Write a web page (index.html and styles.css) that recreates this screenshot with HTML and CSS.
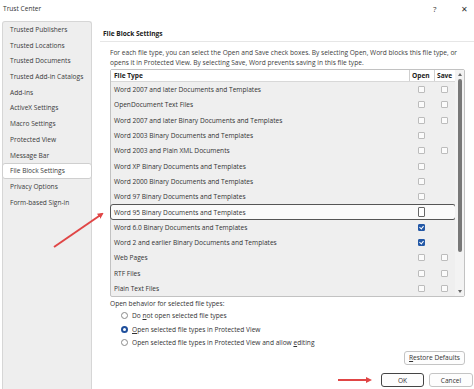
FILE: index.html
```html
<!DOCTYPE html>
<html lang="en">
<head>
  <meta charset="UTF-8" />
  <title>Trust Center</title>
  <link rel="stylesheet" href="styles.css">
</head>
<body>
  <div class="titlebar">
    <span class="title">Trust Center</span>
    <span class="help">?</span>
    <span class="close">&#x2715;</span>
  </div>

  <div class="layout">
    <div class="nav">
      <div class="nav-item">Trusted Publishers</div>
      <div class="nav-item">Trusted Locations</div>
      <div class="nav-item">Trusted Documents</div>
      <div class="nav-item">Trusted Add-in Catalogs</div>
      <div class="nav-item">Add-ins</div>
      <div class="nav-item">ActiveX Settings</div>
      <div class="nav-item">Macro Settings</div>
      <div class="nav-item">Protected View</div>
      <div class="nav-item">Message Bar</div>
      <div class="nav-item selected">File Block Settings</div>
      <div class="nav-item">Privacy Options</div>
      <div class="nav-item">Form-based Sign-in</div>
    </div>

    <div class="main">
      <div class="heading">File Block Settings</div>
      <div class="content">
        <p class="desc">For each file type, you can select the Open and Save check boxes. By selecting Open, Word blocks this file type, or opens it in Protected View. By selecting Save, Word prevents saving in this file type.</p>

        <div class="table">
          <div class="rows">
            <div class="row head">
              <span class="name">File Type</span>
              <span class="col">Open</span>
              <span class="col">Save</span>
            </div>
            <div id="fileRows"></div>
          </div>
          <div class="scrollbar">
            <span class="arrow up"></span>
            <span class="thumb"></span>
            <span class="arrow down"></span>
          </div>
        </div>

        <div class="behavior">
          <div class="label">Open behavior for selected file types:</div>
          <label class="radio"><span class="dot"></span><span>Do <u>n</u>ot open selected file types</span></label>
          <label class="radio on"><span class="dot"></span><span><u>O</u>pen selected file types in Protected View</span></label>
          <label class="radio"><span class="dot"></span><span>Open selected file types in Protected View and allow <u>e</u>diting</span></label>
        </div>

        <div class="restore-row">
          <button class="btn restore"><u>R</u>estore Defaults</button>
        </div>
      </div>

      <div class="footer">
        <button class="btn ok">OK</button>
        <button class="btn">Cancel</button>
      </div>
    </div>
  </div>

  <svg class="arrows" width="474" height="389" viewBox="0 0 474 389">
    <defs>
      <marker id="head" markerWidth="6" markerHeight="6" refX="4" refY="3" orient="auto" markerUnits="userSpaceOnUse">
        <path d="M0,0 L6,3 L0,6 Z" fill="#e04545" />
      </marker>
    </defs>
    <line x1="54" y1="247" x2="102" y2="214" stroke="#e04545" stroke-width="2" marker-end="url(#head)" />
    <line x1="338" y1="380" x2="370" y2="380" stroke="#e04545" stroke-width="2" marker-end="url(#head)" />
  </svg>

  <script>
    // name, open state, has save box
    const files = [
      ["Word 2007 and later Documents and Templates", "", true],
      ["OpenDocument Text Files", "", true],
      ["Word 2007 and later Binary Documents and Templates", "", true],
      ["Word 2003 Binary Documents and Templates", "", false],
      ["Word 2003 and Plain XML Documents", "", true],
      ["Word XP Binary Documents and Templates", "", false],
      ["Word 2000 Binary Documents and Templates", "", false],
      ["Word 97 Binary Documents and Templates", "", false],
      ["Word 95 Binary Documents and Templates", "focus", false],
      ["Word 6.0 Binary Documents and Templates", "checked", false],
      ["Word 2 and earlier Binary Documents and Templates", "checked", false],
      ["Web Pages", "", true],
      ["RTF Files", "", true],
      ["Plain Text Files", "", true]
    ];

    document.getElementById('fileRows').innerHTML = files.map(f => `
      <div class="row${f[1] === 'focus' ? ' focused' : ''}">
        <span class="name">${f[0]}</span>
        <span class="col"><span class="box ${f[1]}"></span></span>
        <span class="col">${f[2] ? '<span class="box"></span>' : ''}</span>
      </div>
    `).join('');
  </script>
</body>
</html>
```

FILE: styles.css
```css
body {
  margin: 0;
  width: 474px;
  height: 389px;
  overflow: hidden;
  background: #fff;
  font-family: "Open Sans", "Noto Sans", sans-serif;
  font-size: 6.6px;
  color: #333;
  position: relative;
}
.titlebar {
  height: 17px;
  display: flex;
  align-items: center;
  padding: 0 3px;
}
.titlebar .title {
  flex: 1;
}
.titlebar .help {
  width: 28px;
  font-size: 8px;
}
.titlebar .close {
  width: 10px;
  font-size: 8px;
}
.layout {
  display: flex;
  height: 368px;
  margin-top: 4px;
}
.nav {
  width: 88px;
  margin-left: 2px;
  background: #eeeeee;
  border: 1px solid #d6d6d6;
  border-bottom: none;
  border-radius: 3px 3px 0 0;
}
.nav-item {
  height: 15.7px;
  line-height: 15.7px;
  padding-left: 7px;
  color: #3a3a3a;
  white-space: nowrap;
}
.nav-item.selected {
  background: #fff;
  border: 1px solid #cfcfcf;
  border-radius: 3px;
  margin: 0 -1px;
  height: 13.7px;
  line-height: 13.7px;
}
.main {
  flex: 1;
  display: flex;
  flex-direction: column;
}
.heading {
  font-weight: bold;
  color: #222;
  padding: 6px 0 0 3px;
  margin-left: 8px;
  height: 14px;
  line-height: 14px;
  border-bottom: 1px solid #e6e6e6;
}
.content {
  padding-left: 18px;
  padding-right: 9px;
  flex: 1;
}
.desc {
  margin: 6px 0 1px;
  line-height: 10px;
  color: #404040;
}
.table {
  display: flex;
  height: 226px;
  border: 1px solid #c2c2c2;
  border-radius: 2px;
  background: #efefef;
}
.rows {
  flex: 1;
}
.row {
  display: flex;
  height: 15.3px;
  align-items: center;
  box-sizing: border-box;
}
.row.head {
  height: 12px;
  background: #fff;
  font-weight: bold;
  color: #222;
  border-bottom: 1px solid #d8d8d8;
}
.row .name {
  flex: 1;
  padding-left: 3px;
  white-space: nowrap;
}
.row .col {
  width: 25px;
  display: flex;
  justify-content: center;
  align-items: center;
  height: 100%;
}
.row .col:last-child {
  width: 21px;
}
.row.head .col {
  border-left: 1px solid #cfcfcf;
  justify-content: flex-start;
  padding-left: 2px;
  box-sizing: border-box;
}
.row.focused {
  background: #fafafa;
  border: 1px solid #555;
  border-radius: 3px;
  margin: 0 -1px;
}
.box {
  width: 5px;
  height: 5px;
  border: 1px solid #bcbcbc;
  border-radius: 1px;
  background: #fbfbfb;
}
.box.focus {
  height: 8px;
  border: 1px solid #666;
  background: #fff;
}
.box.checked {
  background: #2358a6;
  border-color: #2358a6;
  position: relative;
}
.box.checked::after {
  content: "";
  position: absolute;
  left: 1px;
  top: 0;
  width: 2px;
  height: 3px;
  border: solid #fff;
  border-width: 0 1px 1px 0;
  transform: rotate(40deg);
}
.scrollbar {
  width: 9px;
  display: flex;
  flex-direction: column;
  align-items: center;
  background: #f3f3f3;
}
.arrow {
  width: 0;
  height: 0;
  border-left: 2px solid transparent;
  border-right: 2px solid transparent;
  margin: 3px 0;
}
.arrow.up {
  border-bottom: 3px solid #666;
}
.arrow.down {
  border-top: 3px solid #666;
  margin-top: auto;
}
.thumb {
  width: 4px;
  height: 173px;
  background: #787878;
  border-radius: 2px;
}
.behavior {
  margin-top: 1px;
}
.label {
  height: 11px;
  line-height: 11px;
}
.radio {
  display: flex;
  align-items: center;
  height: 13.5px;
  padding-left: 11px;
}
.radio .dot {
  width: 5px;
  height: 5px;
  border: 1px solid #8a8a8a;
  border-radius: 50%;
  margin-right: 4px;
  background: #fff;
}
.radio.on .dot {
  border: 2px solid #1f4f9c;
  width: 3px;
  height: 3px;
}
.restore-row {
  display: flex;
  justify-content: flex-end;
  margin-top: 1px;
}
.btn {
  font-family: inherit;
  font-size: 6.6px;
  color: #333;
  background: #fdfdfd;
  border: 1px solid #c4c4c4;
  border-radius: 3px;
  height: 14px;
  padding: 0;
  width: 44px;
}
.btn.restore {
  width: 61px;
}
.footer {
  display: flex;
  justify-content: flex-end;
  gap: 5px;
  padding: 0 1px 2px 0;
}
.btn.ok {
  border: 1px solid #444;
  width: 43px;
}
.arrows {
  position: absolute;
  left: 0;
  top: 0;
  pointer-events: none;
}
```
